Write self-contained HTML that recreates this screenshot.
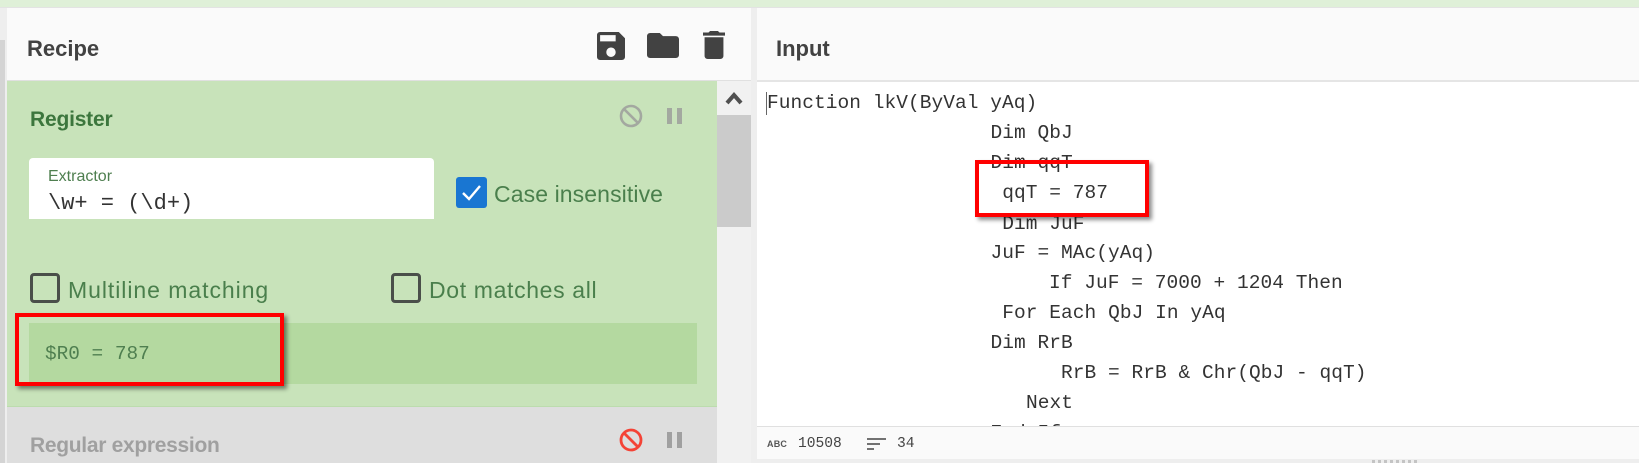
<!DOCTYPE html>
<html><head><meta charset="utf-8"><style>
html,body{margin:0;padding:0;width:1639px;height:463px;overflow:hidden;background:#eee;font-family:"Liberation Sans",sans-serif}
#w{position:absolute;left:0;top:0;width:1639px;height:463px;overflow:hidden;background:#eee;filter:blur(.3px)}
.a{position:absolute}
.t{position:absolute;white-space:pre;line-height:30px;height:30px}
.m{font-family:"Liberation Mono",monospace}
.code{font-size:19.5px;color:#333;letter-spacing:.05px;left:767px}
.rb{position:absolute;box-sizing:border-box;border:4px solid #f00;box-shadow:3px 3px 4px rgba(0,0,0,.45)}
svg{position:absolute;display:block}
</style></head><body><div id="w">
<div class="a" style="left:0;top:0;width:1639px;height:7px;background:#dff0d8"></div>
<div class="a" style="left:0;top:7px;width:1639px;height:1px;background:#e3e3e3"></div>
<div class="a" style="left:0;top:40px;width:5px;height:423px;background:#d4d4d4"></div>

<!-- recipe -->
<div class="a" style="left:7px;top:8px;width:744px;height:72px;background:#fafafa"></div>
<div class="a" style="left:7px;top:80px;width:744px;height:1px;background:#e0e0e0"></div>
<div class="t" style="left:27px;top:34px;font-size:22px;font-weight:bold;color:#424242">Recipe</div>
<svg style="left:597px;top:32px" width="28" height="28" viewBox="3 3 18 18"><path fill="#424242" d="M17 3H5c-1.11 0-2 .9-2 2v14c0 1.1.89 2 2 2h14c1.1 0 2-.9 2-2V7l-4-4zm-5 16c-1.66 0-3-1.34-3-3s1.34-3 3-3 3 1.34 3 3-1.34 3-3 3zm3-10H5V5h10v4z"/></svg>
<svg style="left:647px;top:33px" width="32" height="25" viewBox="2 4 20 16" preserveAspectRatio="none"><path fill="#424242" d="M10 4H4c-1.1 0-1.99.9-1.99 2L2 18c0 1.1.9 2 2 2h16c1.1 0 2-.9 2-2V8c0-1.1-.9-2-2-2h-8l-2-2z"/></svg>
<svg style="left:703px;top:31px" width="22" height="28" viewBox="5 3 14 18" preserveAspectRatio="none"><path fill="#424242" d="M6 19c0 1.1.9 2 2 2h8c1.1 0 2-.9 2-2V7H6v12zM19 4h-3.5l-1-1h-5l-1 1H5v2h14V4z"/></svg>

<!-- scrollbar -->
<div class="a" style="left:717px;top:81px;width:34px;height:382px;background:#f1f1f1"></div>
<div class="a" style="left:717px;top:115px;width:34px;height:112px;background:#cbcbcb"></div>
<svg style="left:724px;top:90px" width="20" height="16" viewBox="0 0 20 16"><path d="M3 13 L10 5 L17 13" fill="none" stroke="#505050" stroke-width="4"/></svg>

<!-- register -->
<div class="a" style="left:7px;top:81px;width:710px;height:326px;background:#c8e3ba"></div>
<div class="t" style="left:30px;top:105px;font-size:21px;font-weight:bold;color:#3c763d;letter-spacing:-.2px">Register</div>
<svg style="left:619px;top:104px" width="24" height="24" viewBox="0 0 24 24"><circle cx="12" cy="12" r="10" fill="none" stroke="#a3a8a0" stroke-width="2.6"/><path d="M5 5 L19 19" stroke="#a3a8a0" stroke-width="2.6"/></svg>
<svg style="left:667px;top:108px" width="15" height="16" viewBox="0 0 15 16"><rect x="0" y="0" width="5" height="16" fill="#a3a8a0"/><rect x="10" y="0" width="5" height="16" fill="#a3a8a0"/></svg>

<div class="a" style="left:29px;top:158px;width:405px;height:61px;background:#fff;border-radius:4px 4px 0 0"></div>
<div class="t" style="left:48px;top:162px;font-size:16px;color:#4f7f50">Extractor</div>
<div class="t m" style="left:48px;top:189px;font-size:22px;color:#333">\w+ = (\d+)</div>
<div class="a" style="left:456px;top:177px;width:31px;height:31px;background:#1976d2;border-radius:3px"></div>
<svg style="left:456px;top:177px" width="31" height="31" viewBox="0 0 31 31"><path d="M7 16 L13 22 L24 9" fill="none" stroke="#fff" stroke-width="2.4"/></svg>
<div class="t" style="left:494px;top:179px;font-size:23px;color:#4a7f4c;letter-spacing:.1px">Case insensitive</div>

<div class="a" style="left:30px;top:273px;width:30px;height:30px;box-sizing:border-box;border:3px solid #4a4f4a;border-radius:4px"></div>
<div class="t" style="left:68px;top:275px;font-size:23px;color:#4a7f4c;letter-spacing:.95px">Multiline matching</div>
<div class="a" style="left:391px;top:273px;width:30px;height:30px;box-sizing:border-box;border:3px solid #4a4f4a;border-radius:4px"></div>
<div class="t" style="left:429px;top:275px;font-size:23px;color:#4a7f4c;letter-spacing:.65px">Dot matches all</div>

<div class="a" style="left:29px;top:323px;width:668px;height:61px;background:#b4d9a0"></div>
<div class="t m" style="left:45px;top:339px;font-size:19.4px;color:#4f7f50">$R0 = 787</div>
<div class="rb" style="left:15px;top:313px;width:269px;height:73px"></div>

<!-- regex -->
<div class="a" style="left:7px;top:407px;width:710px;height:56px;background:#dedede"></div>
<div class="a" style="left:7px;top:406px;width:710px;height:1px;background:#bcdcae"></div>
<div class="t" style="left:30px;top:431px;font-size:21px;font-weight:bold;color:#a0a0a0;letter-spacing:-.3px">Regular expression</div>
<svg style="left:619px;top:428px" width="24" height="24" viewBox="0 0 24 24"><circle cx="12" cy="12" r="10" fill="none" stroke="#f44336" stroke-width="2.8"/><path d="M5 5 L19 19" stroke="#f44336" stroke-width="2.8"/></svg>
<svg style="left:667px;top:432px" width="15" height="16" viewBox="0 0 15 16"><rect x="0" y="0" width="5" height="16" fill="#a0a0a0"/><rect x="10" y="0" width="5" height="16" fill="#a0a0a0"/></svg>

<!-- input -->
<div class="a" style="left:757px;top:8px;width:882px;height:73px;background:#fafafa"></div>
<div class="a" style="left:757px;top:81px;width:882px;height:345px;background:#fff;overflow:hidden"></div>
<div class="a" style="left:757px;top:80px;width:882px;height:2px;background:#e5e5e5"></div>
<div class="t" style="left:776px;top:34px;font-size:22px;font-weight:bold;color:#424242">Input</div>
<div class="a" style="left:766px;top:92px;width:1px;height:23px;background:#666"></div>
<div class="a" style="left:757px;top:82px;width:882px;height:344px;overflow:hidden">
<div class="t m code" style="left:10px;top:6px">Function lkV(ByVal yAq)</div>
<div class="t m code" style="left:233.5px;top:36px">Dim QbJ</div>
<div class="t m code" style="left:233.5px;top:66px">Dim qqT</div>
<div class="t m code" style="left:245.3px;top:96px">qqT = 787</div>
<div class="t m code" style="left:245.3px;top:127px">Dim JuF</div>
<div class="t m code" style="left:233.5px;top:156px">JuF = MAc(yAq)</div>
<div class="t m code" style="left:292px;top:186px">If JuF = 7000 + 1204 Then</div>
<div class="t m code" style="left:245.3px;top:216px">For Each QbJ In yAq</div>
<div class="t m code" style="left:233.5px;top:246px">Dim RrB</div>
<div class="t m code" style="left:304px;top:276px">RrB = RrB &amp; Chr(QbJ - qqT)</div>
<div class="t m code" style="left:269px;top:306px">Next</div>
<div class="t m code" style="left:233.5px;top:336px">End If</div>
</div>
<div class="rb" style="left:975px;top:160px;width:174px;height:57px"></div>

<!-- status -->
<div class="a" style="left:757px;top:426px;width:882px;height:33px;background:#fafafa;border-top:1px solid #e0e0e0;box-sizing:border-box"></div>
<div class="t" style="left:767px;top:437px;height:14px;line-height:14px;font-size:9px;font-weight:bold;color:#555;letter-spacing:.2px">ABC</div>
<div class="t m" style="left:798px;top:429px;font-size:14.6px;color:#444">10508</div>
<svg style="left:867px;top:438px" width="20" height="13" viewBox="0 0 20 13"><path d="M0 1H19M0 6H13M0 11H7" stroke="#444" stroke-width="1.4"/></svg>
<div class="t m" style="left:897px;top:429px;font-size:14.6px;color:#444">34</div>
<div class="a" style="left:1372px;top:460px;width:45px;height:3px;background:repeating-linear-gradient(90deg,#c4c4c4 0 3px,transparent 3px 6px)"></div>
</div></body></html>
